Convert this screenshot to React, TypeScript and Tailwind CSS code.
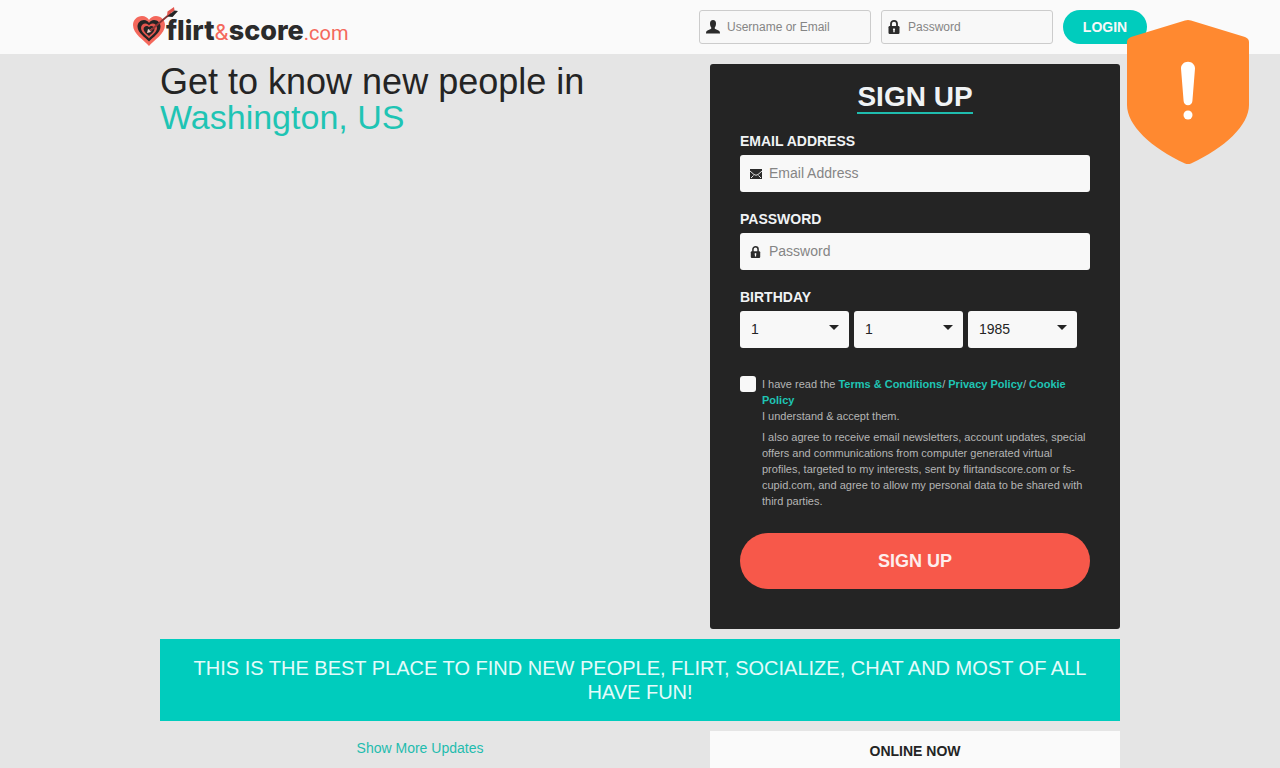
import React, { useState } from 'react';

const HEART = 'M16 30C11 24 0 18 0 9C0 4 4 0 9 0C12 0 15 2 16 4C17 2 20 0 23 0C28 0 32 4 32 9C32 18 21 24 16 30Z';

const Logo = () => (
  <a href="#" className="flex items-end text-[#2b2b2b]">
    <svg width="45" height="40" viewBox="0 0 45 40" className="-mr-3 shrink-0" aria-hidden="true">
      <path d={HEART} fill="#f4685c" transform="translate(0 9)" />
      <path d={HEART} fill="#242424" transform="translate(4.5 13) scale(0.72)" />
      <path d={HEART} fill="#e2564e" transform="translate(8 16.5) scale(0.5)" />
      <path d={HEART} fill="#242424" transform="translate(10.6 19) scale(0.34)" />
      <path d="M14 26L15 22L17 23L19 21L18 25Z" fill="#f8d0cc" />
      <path d="M17 24L38 6" stroke="#8a3535" strokeWidth="1.8" />
      <path d="M34 9L34.500 4.500L41 0L41.500 3.500Z" fill="#e2564e" />
      <path d="M34 9.500L41.500 3.500L45 4L39.500 10Z" fill="#242424" />
    </svg>
    <span className="font-['Inter',sans-serif] text-[27px] leading-[28px] font-extrabold whitespace-nowrap">
      flirt
      <span className="text-[22px] font-normal text-[#f4685c]">&amp;</span>
      score
      <span className="font-['Roboto',sans-serif] text-[20px] font-normal text-[#f4685c]">.com</span>
    </span>
  </a>
);

const UserIcon = () => (
  <svg width="14" height="14" viewBox="0 0 14 14" fill="#2b2b2b" className="shrink-0" aria-hidden="true">
    <path d="M7 0C9 0 10 1.400 10 3.500C10 5.500 9.400 6.600 8.800 7.300V8.800L12.500 10.600C13.600 11.100 14 12 14 13.500H0C0 12 .4 11.100 1.500 10.600L5.200 8.800V7.300C4.600 6.600 4 5.500 4 3.500C4 1.400 5 0 7 0Z" />
  </svg>
);

const LockIcon = ({ className }: { className: string }) => (
  <svg viewBox="0 0 12 14" fill="#2b2b2b" className={className} aria-hidden="true">
    <path d="M3 7V3.800A3 2.900 0 0 1 9 3.800V7" fill="none" stroke="#2b2b2b" strokeWidth="1.800" />
    <rect x="0.500" y="6" width="11" height="8" rx="1.200" />
    <path d="M5.300 10.300A1.100 1.100 0 1 1 6.700 10.300V12.200H5.300Z" fill="#f8f8f8" />
  </svg>
);

const MailIcon = () => (
  <svg width="12" height="10" viewBox="0 0 12 10" fill="#2b2b2b" className="shrink-0" aria-hidden="true">
    <rect width="12" height="10" />
    <path d="M0 2L4 5.500Q6 7 8 5.500L12 2M1 9L3.500 6.500M11 9L8.500 6.500" fill="none" stroke="#f8f8f8" strokeWidth="0.900" />
  </svg>
);

const Shield = () => (
  <svg width="122" height="144" viewBox="0 0 122 144" className="absolute top-5 right-[31px]" aria-hidden="true">
    <path d="M58 .6Q61 -.6 64 .6L118 17Q122 18.500 122 22V85C122 105 98 128 64 143.400Q61 144.600 58 143.400C24 128 0 105 0 85V22Q0 18.500 4 17Z" fill="#ff8930" />
    <path d="M54 48.500C54 44.500 57 41.700 61 41.700S68 44.500 68 48.500L65.400 81C65.200 83.700 63.500 85.200 61 85.200S56.800 83.700 56.600 81Z" fill="#fff" />
    <circle cx="61" cy="95" r="4.500" fill="#fff" />
  </svg>
);

interface SelectProps {
  label: string;
  value: number;
  options: number[];
  onChange: (v: number) => void;
}

const BirthSelect: React.FC<SelectProps> = ({ label, value, options, onChange }) => (
  <div className="relative w-[109px]">
    <select
      aria-label={label}
      value={value}
      onChange={e => onChange(Number(e.target.value))}
      className="w-full h-[37px] pl-[11px] pb-0.5 appearance-none rounded-[3px] bg-[#f8f8f8] text-sm text-[#242424]"
    >
      {options.map(o => <option key={o} value={o}>{o}</option>)}
    </select>
    <svg width="10" height="5" viewBox="0 0 10 5" className="absolute right-2.5 top-3.5 pointer-events-none" aria-hidden="true">
      <path d="M0 0H10L5 5Z" fill="#242424" />
    </svg>
  </div>
);

const range = (from: number, to: number) => Array.from({ length: to - from + 1 }, (_, i) => from + i);

export default function App() {
  const [month, setMonth] = useState(1);
  const [day, setDay] = useState(1);
  const [year, setYear] = useState(1985);
  const [accepted, setAccepted] = useState(false);

  return (
    <div className="relative min-h-screen flex flex-col bg-[#e5e5e5] font-['Liberation_Sans',Arial,sans-serif] text-sm text-[#242424]">
      {/* Header */}
      <header className="bg-[#fafafa]">
        <div className="max-w-[1014px] h-[54px] mx-auto flex items-center justify-between">
          <Logo />
          <form className="flex gap-2.5" onSubmit={e => e.preventDefault()}>
            <label className="flex items-center gap-[7px] w-[172px] h-[34px] px-1.5 border border-[#ccc] rounded-[3px] bg-[#f8f8f8]">
              <UserIcon />
              <input type="text" aria-label="Username or Email" placeholder="Username or Email" className="min-w-0 flex-1 text-xs outline-none placeholder:text-[#858585]" />
            </label>
            <label className="flex items-center gap-2 w-[172px] h-[34px] px-1.5 border border-[#ccc] rounded-[3px] bg-[#f8f8f8]">
              <LockIcon className="w-3 h-3.5 shrink-0" />
              <input type="password" aria-label="Password" placeholder="Password" className="min-w-0 flex-1 text-xs outline-none placeholder:text-[#858585]" />
            </label>
            <button type="submit" className="w-[84px] h-[34px] rounded-full bg-[#00ccbd] font-bold text-[#f8f8f8]">LOGIN</button>
          </form>
        </div>
      </header>

      <main className="w-full max-w-[960px] mx-auto flex flex-col grow">
        {/* Headline + sign up */}
        <div className="flex justify-between items-start pt-2.5">
          <h1 className="text-[36px] leading-9">
            Get to know new people in
            <span className="block text-[34px] leading-[34px] text-[#1fc4b4]">Washington, US</span>
          </h1>

          <form className="w-[410px] px-[30px] pt-[18px] pb-10 rounded-[3px] bg-[#242424] text-[#f0f3f5]" onSubmit={e => e.preventDefault()}>
            <h2 className="w-fit mx-auto border-b-2 border-[#1fbcae] text-[28px] leading-[30px] font-bold">SIGN UP</h2>

            <label htmlFor="email" className="block mt-[17px] mb-1 leading-5 font-bold">EMAIL ADDRESS</label>
            <div className="flex items-center gap-[7px] h-[37px] px-2.5 rounded-[3px] bg-[#f8f8f8]">
              <MailIcon />
              <input id="email" type="email" placeholder="Email Address" className="min-w-0 flex-1 pb-0.5 text-sm text-[#242424] outline-none placeholder:text-[#858585]" />
            </div>

            <label htmlFor="password" className="block mt-[17px] mb-1 leading-5 font-bold">PASSWORD</label>
            <div className="flex items-center gap-2 h-[37px] px-2.5 rounded-[3px] bg-[#f8f8f8]">
              <LockIcon className="w-[11px] h-3 shrink-0" />
              <input id="password" type="password" placeholder="Password" className="min-w-0 flex-1 pb-0.5 text-sm text-[#242424] outline-none placeholder:text-[#858585]" />
            </div>

            <fieldset className="mt-[17px]">
              <legend className="mb-1 leading-5 font-bold">BIRTHDAY</legend>
              <div className="flex gap-[5px]">
                <BirthSelect label="Month" value={month} options={range(1, 12)} onChange={setMonth} />
                <BirthSelect label="Day" value={day} options={range(1, 31)} onChange={setDay} />
                <BirthSelect label="Year" value={year} options={range(1920, 2005)} onChange={setYear} />
              </div>
            </fieldset>

            <div className="flex items-start gap-1.5 mt-7 text-[11px] leading-4 text-[#b5b5b5]">
              <input
                id="terms"
                type="checkbox"
                checked={accepted}
                onChange={e => setAccepted(e.target.checked)}
                className="w-4 h-4 shrink-0 appearance-none rounded-[3px] bg-[#f8f8f8] checked:bg-[#00ccbd]"
              />
              <div>
                <label htmlFor="terms" className="block">
                  I have read the <a href="#" className="font-bold text-[#1fc4b4]">Terms &amp; Conditions</a>/{' '}
                  <a href="#" className="font-bold text-[#1fc4b4]">Privacy Policy</a>/{' '}
                  <a href="#" className="font-bold text-[#1fc4b4]">Cookie Policy</a>
                  <br />
                  I understand &amp; accept them.
                </label>
                <p className="mt-[5px]">
                  I also agree to receive email newsletters, account updates, special offers and communications from
                  computer generated virtual profiles, targeted to my interests, sent by flirtandscore.com or
                  fs-cupid.com, and agree to allow my personal data to be shared with third parties.
                </p>
              </div>
            </div>

            <button type="submit" className="block w-full h-14 mt-6 rounded-full bg-[#f7584a] text-lg font-bold text-[#fdeeed]">SIGN UP</button>
          </form>
        </div>

        {/* Tagline */}
        <p className="mt-2.5 px-5 py-[17px] bg-[#00ccbd] text-center text-xl leading-6 text-[#e4fbfa]">
          THIS IS THE BEST PLACE TO FIND NEW PEOPLE, FLIRT, SOCIALIZE, CHAT AND MOST OF ALL HAVE FUN!
        </p>

        <div className="flex gap-[30px] grow pt-2.5">
          <div className="flex-1 pt-[7px] text-center">
            <a href="#" className="text-[#1fbcae]">Show More Updates</a>
          </div>
          <section className="w-[410px] pt-2.5 bg-[#fafafa] text-center">
            <h3 className="font-bold">ONLINE NOW</h3>
          </section>
        </div>
      </main>

      <Shield />
    </div>
  );
}
